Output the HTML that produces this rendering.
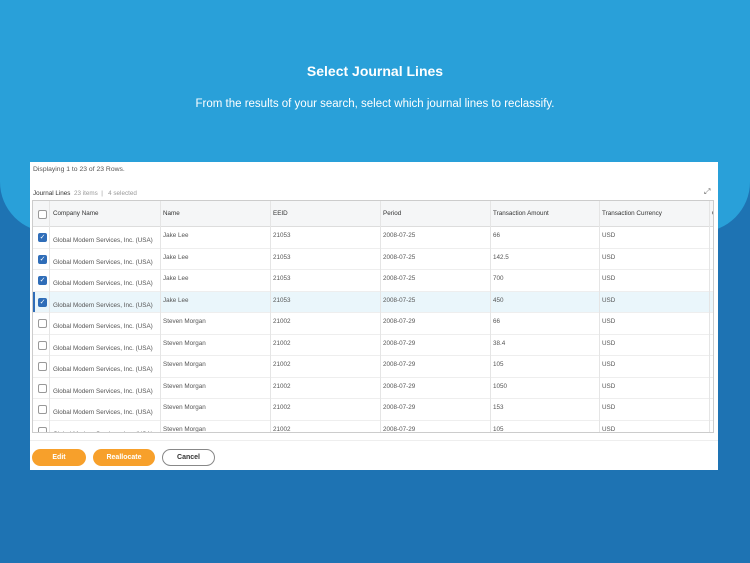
<!DOCTYPE html>
<html><head><style>
*{margin:0;padding:0;box-sizing:border-box}
body{width:750px;height:563px;overflow:hidden;background:#1e73b3;font-family:"Liberation Sans",sans-serif;position:relative}
.top{position:absolute;left:0;top:0;width:750px;height:232px;background:#29a0d9;border-radius:0 0 50px 50px}
h1{position:absolute;top:63px;width:750px;text-align:center;color:#fff;font-size:14px;font-weight:bold}
.sub{position:absolute;top:98px;width:750px;text-align:center;color:#fff;font-size:11.5px}
.panel{position:absolute;left:30px;top:162px;width:688px;height:308px;background:#fff}
.t{position:absolute;font-size:6.3px;color:#555;white-space:nowrap}
.tbl{position:absolute;left:2px;top:38px;width:682px;height:233px;border:1px solid #ccc;overflow:hidden}
.hdr{position:absolute;left:0;top:0;width:682px;height:26px;background:#f5f6f7;border-bottom:1px solid #ddd}
.row{position:absolute;left:0;width:682px;height:21.5px;border-bottom:1px solid #eee}
.sel{background:#eaf6fb}
.vl{position:absolute;top:0;bottom:0;width:1px;background:#e5e5e5}
.cb{position:absolute;left:5px;width:9px;height:9px;border:1px solid #999;border-radius:2px;background:#fff}
.cb.on{background:#2f6db8;border-color:#2f6db8;color:#fff;font-size:7px;line-height:7px;text-align:center}
.btn{position:absolute;top:287px;height:17px;border-radius:9px;font-size:7px;font-weight:bold;text-align:center;line-height:17px}
</style></head><body>
<div class="top"></div>
<h1>Select Journal Lines</h1>
<div class="sub">From the results of your search, select which journal lines to reclassify.</div>
<div class="panel">
<div class="t" style="left:3px;top:4px;font-size:6.8px">Displaying 1 to 23 of 23 Rows.</div>
<div class="t" style="left:3px;top:28px;color:#333">Journal Lines <span style="color:#999">&nbsp;23 items &nbsp;|&nbsp;&nbsp; 4 selected</span></div>
<div class="t" style="left:674px;top:25px;font-size:8px;color:#666">⤢</div>
<div class="tbl">
<div class="hdr">
<div class="cb" style="top:9px"></div>
<div class="t" style="left:20px;top:9px;color:#333">Company Name</div>
<div class="t" style="left:130px;top:9px;color:#333">Name</div>
<div class="t" style="left:240px;top:9px;color:#333">EEID</div>
<div class="t" style="left:350px;top:9px;color:#333">Period</div>
<div class="t" style="left:460px;top:9px;color:#333">Transaction Amount</div>
<div class="t" style="left:569px;top:9px;color:#333">Transaction Currency</div>
<div class="t" style="left:679px;top:9px;color:#333">C</div>
</div>
<div id="rows"></div>
<div class="vl" style="left:16px"></div><div class="vl" style="left:127px"></div><div class="vl" style="left:237px"></div><div class="vl" style="left:347px"></div><div class="vl" style="left:457px"></div><div class="vl" style="left:566px"></div><div class="vl" style="left:676px"></div>
</div>
<div style="position:absolute;left:0;top:278px;width:688px;height:1px;background:#eee"></div>
<div class="btn" style="left:2px;width:54px;background:#f7a02b;color:#fff">Edit</div>
<div class="btn" style="left:63px;width:62px;background:#f7a02b;color:#fff">Reallocate</div>
<div class="btn" style="left:132px;width:53px;border:1px solid #888;color:#333;line-height:15px">Cancel</div>
</div>
<script>
var d=[["Jake Lee","21053","2008-07-25","66",1],["Jake Lee","21053","2008-07-25","142.5",1],["Jake Lee","21053","2008-07-25","700",1],["Jake Lee","21053","2008-07-25","450",2],["Steven Morgan","21002","2008-07-29","66",0],["Steven Morgan","21002","2008-07-29","38.4",0],["Steven Morgan","21002","2008-07-29","105",0],["Steven Morgan","21002","2008-07-29","1050",0],["Steven Morgan","21002","2008-07-29","153",0],["Steven Morgan","21002","2008-07-29","105",0]];
var h="";d.forEach(function(r,i){var y=26+i*21.5;h+='<div class="row'+(r[4]==2?' sel':'')+'" style="top:'+y+'px">'+(r[4]==2?'<div style="position:absolute;left:0;top:0;bottom:0;width:2px;background:#2f6db8"></div>':'')+'<div class="cb'+(r[4]?' on':'')+'" style="top:6px">'+(r[4]?'✓':'')+'</div><div class="t" style="left:20px;top:10px">Global Modern Services, Inc. (USA)</div><div class="t" style="left:130px;top:5px">'+r[0]+'</div><div class="t" style="left:240px;top:5px">'+r[1]+'</div><div class="t" style="left:350px;top:5px">'+r[2]+'</div><div class="t" style="left:460px;top:5px">'+r[3]+'</div><div class="t" style="left:569px;top:5px">USD</div></div>'});
document.getElementById("rows").innerHTML=h;
</script>
</body></html>
